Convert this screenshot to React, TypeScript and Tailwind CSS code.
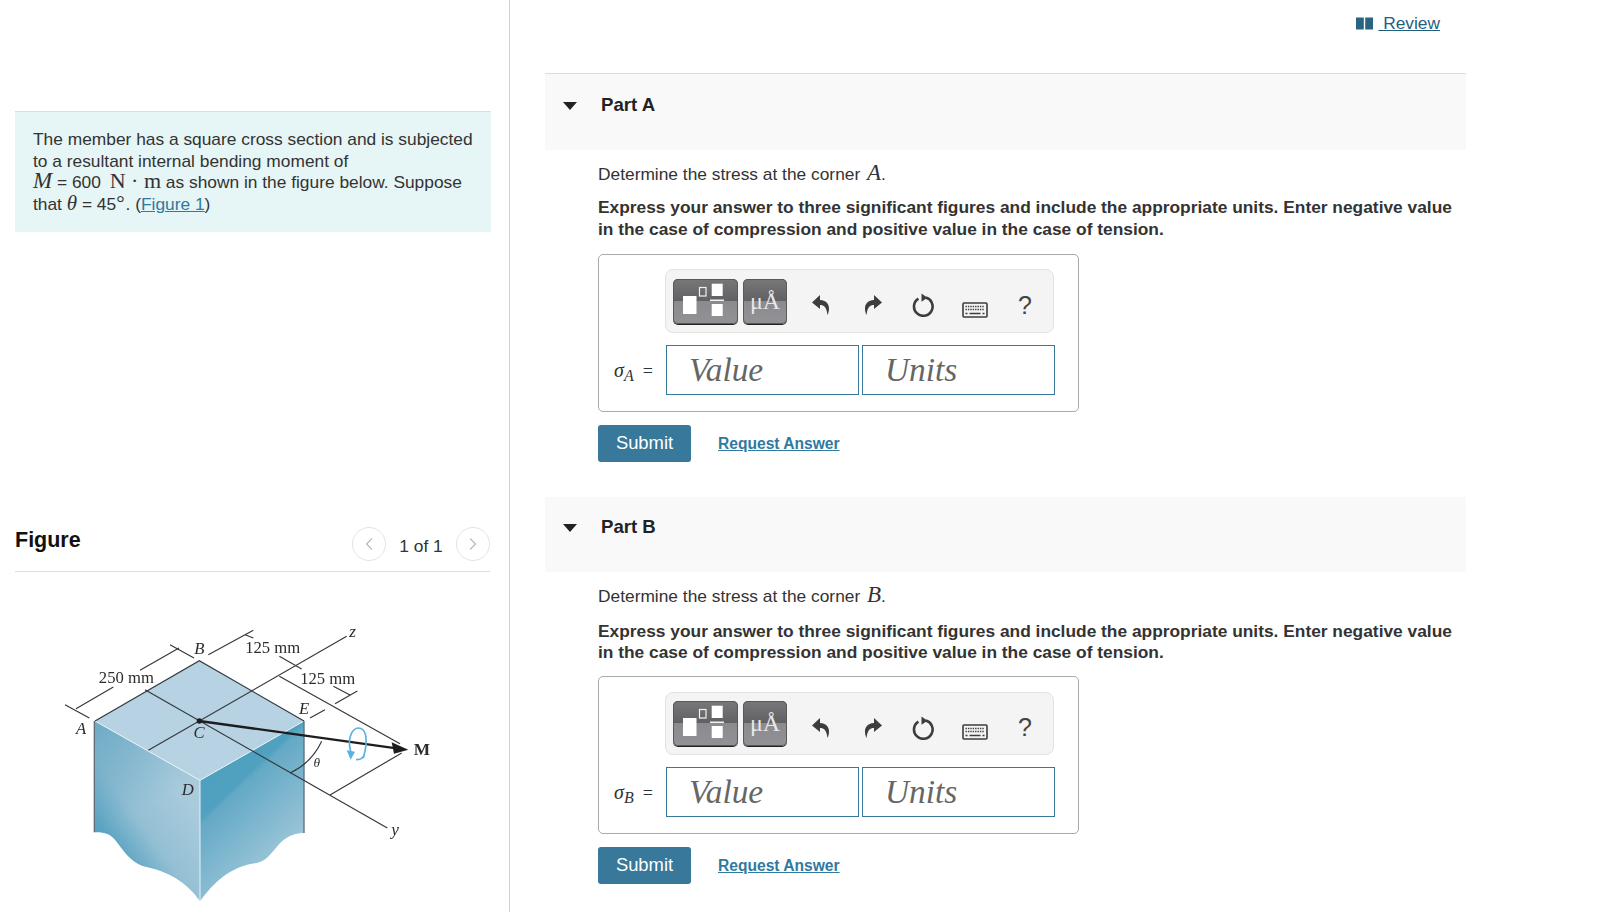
import { ChevronLeft, ChevronRight } from "lucide-react";
import React from "react";

const serif = "font-['Liberation_Serif',serif]";

const Cube = () => {
  const ink = "#33383b";
  return (
    <svg viewBox="45 187 1425 1017" className="block w-[475px] h-[339px] blur-[0.3px]">
      <defs>
        <linearGradient id="leftFace" gradientUnits="userSpaceOnUse" x1="300" y1="1040" x2="560" y2="860">
          <stop offset="0" stopColor="#4d9dbd" />
          <stop offset="0.18" stopColor="#5da5c3" />
          <stop offset="0.5" stopColor="#93bfd4" />
          <stop offset="1" stopColor="#a9cbdc" />
        </linearGradient>
        <linearGradient id="leftShade" gradientUnits="userSpaceOnUse" x1="285" y1="640" x2="420" y2="900">
          <stop offset="0" stopColor="#5da2c0" stopOpacity="0.75" />
          <stop offset="1" stopColor="#5da2c0" stopOpacity="0" />
        </linearGradient>
        <linearGradient id="rightFace" gradientUnits="userSpaceOnUse" x1="640" y1="740" x2="900" y2="1014">
          <stop offset="0" stopColor="#4f9fbf" />
          <stop offset="0.29" stopColor="#50a0c0" />
          <stop offset="0.33" stopColor="#64a9c6" />
          <stop offset="1" stopColor="#a0c8d9" />
        </linearGradient>
      </defs>

      <path d="M285 634 L600 812 L600 1175 C570 1130 520 1090 440 1072 C390 1060 370 1020 345 990 C325 968 305 968 283 968 Z" fill="url(#leftFace)" />
      <path d="M285 634 L600 812 L600 1175 C570 1130 520 1090 440 1072 C390 1060 370 1020 345 990 C325 968 305 968 283 968 Z" fill="url(#leftShade)" />
      <path d="M912 634 L600 812 L600 1175 C640 1120 690 1070 770 1060 C825 1050 830 970 912 970 Z" fill="url(#rightFace)" />
      <path d="M285 634 L598 453 L912 634 L600 812 Z" fill="#b7d2e2" />

      <path d="M285 634 L600 812 L912 634 M600 812 V1175" fill="none" stroke="#e8f3f8" strokeWidth="3" />
      <path d="M283 634 V968 M912 634 V970" fill="none" stroke="#5f6f78" strokeWidth="4" />
      <path d="M285 634 L598 453 L912 634" fill="none" stroke={ink} strokeWidth="3.5" />

      <g fill="none" stroke={ink} strokeWidth="3.5">
        {/* axes */}
        <path d="M445 722 L1040 380" />
        <path d="M435 540 L1162 955" />
        <path d="M838 500 L1200 702" />
        <path d="M990 856 L1205 730" />
        {/* 250 mm */}
        <path d="M195 585 L268 625 M510 405 L582 445" />
        <path d="M228 597 L340 532 M420 482 L537 415" />
        {/* 125 mm */}
        <path d="M625 435 L760 362 M735 375 L760 385" />
        <path d="M838 440 L905 478" />
        <path d="M930 625 L975 600 M1005 582 L1072 544 M1000 530 L1050 556" />
        {/* theta */}
        <path d="M870 790 Q935 760 965 695" />
      </g>

      <path d="M598 634 L1190 716" fill="none" stroke="#1d1d1d" strokeWidth="7" />
      <path d="M1225 720 L1175 698 L1182 732 Z" fill="#1d1d1d" />
      <circle cx="598" cy="634" r="8" fill="#1d1d1d" />

      <path d="M1052 725 C1040 680 1060 655 1075 655 C1095 655 1108 680 1090 745" fill="none" stroke="#5ab0de" strokeWidth="5" />
      <path d="M1068 750 C1075 750 1085 750 1090 740" fill="none" stroke="#5ab0de" strokeWidth="5" />
      <path d="M1040 722 L1065 726 L1052 750 Z" fill="#5ab0de" />

      <g className={serif} fill="#2c2c2c" fontSize="50" textAnchor="middle">
        <text x="379" y="520" textLength="165" lengthAdjust="spacingAndGlyphs">250 mm</text>
        <text x="818" y="431" textLength="165" lengthAdjust="spacingAndGlyphs">125 mm</text>
        <text x="983" y="523" textLength="165" lengthAdjust="spacingAndGlyphs">125 mm</text>
        <g fontStyle="italic">
          <text x="243" y="674">A</text>
          <text x="598" y="432">B</text>
          <text x="597" y="686">C</text>
          <text x="563" y="855">D</text>
          <text x="912" y="612">E</text>
          <text x="950" y="772" fontSize="40">θ</text>
          <text x="1058" y="382" fontSize="52">z</text>
          <text x="1185" y="975" fontSize="52">y</text>
        </g>
        <text x="1266" y="737" fontWeight="700" fontSize="52">M</text>
      </g>
    </svg>
  );
};

const TemplateIcon = () => (
  <svg viewBox="0 0 65 45" className="w-[65px] h-[45px]">
    <rect x="10" y="17" width="13.5" height="18" fill="#fff" />
    <rect x="26.5" y="8.5" width="6.5" height="8.5" fill="none" stroke="#f2f2f2" strokeWidth="1.2" />
    <rect x="38.7" y="4.7" width="11" height="12.3" fill="#fff" />
    <rect x="37" y="20.5" width="14" height="1.5" fill="#f2f2f2" />
    <rect x="38.7" y="25" width="11" height="12" fill="#fff" />
  </svg>
);

const UndoIcon = ({ flip }: { flip?: boolean }) => (
  <svg viewBox="0 0 18 20" className={`w-[18px] h-[20px] ${flip ? "-scale-x-100" : ""}`}>
    <path d="M8 0 L0 7.5 L8 14 V10 C12 10 14.5 12 15.5 20 C18 15 18.5 5.5 8 5 Z" fill="#3d3d3d" />
  </svg>
);

const RefreshIcon = () => (
  <svg viewBox="0 0 24 24" className="w-[24px] h-[24px]">
    <path d="M15 4.6 A9.3 9.3 0 1 1 7.4 5.6" fill="none" stroke="#3d3d3d" strokeWidth="2.6" />
    <path d="M10.5 0.5 L16.5 4.8 L10.5 8.8 Z" fill="#3d3d3d" />
  </svg>
);

const KeyboardIcon = () => (
  <svg viewBox="0 0 26 16" className="w-[26px] h-[16px]">
    <rect x="1" y="1" width="24" height="14" rx="1" fill="#f4f4f4" stroke="#3d3d3d" strokeWidth="1.6" />
    <path d="M3.5 4.5 H22.5 M3.5 7.5 H22.5" stroke="#3d3d3d" strokeWidth="1.6" strokeDasharray="1.4 1" />
    <path d="M3.5 11.5 H5.5 M7.5 11.5 H18.5 M20.5 11.5 H22.5" stroke="#3d3d3d" strokeWidth="1.6" />
  </svg>
);

const Toolbar = ({ height }: { height: string }) => (
  <div className={`ml-[66px] w-[389px] ${height} bg-[#f4f4f4] border border-[#e2e2e2] rounded-lg flex items-center pl-[7px]`}>
    <button className="w-[65px] h-[45px] rounded-[5px] shadow-[inset_0_0_0_1px_#59595b,0_1px_0_#222] bg-[linear-gradient(#78787a_0%,#616163_48%,#8a8a8f_48%,#919196_100%)]">
      <TemplateIcon />
    </button>
    <button className={`ml-[5px] w-[44px] h-[45px] rounded-[5px] shadow-[inset_0_0_0_1px_#59595b,0_1px_0_#222] bg-[linear-gradient(#78787a_0%,#616163_48%,#8a8a8f_48%,#919196_100%)] text-[#e8e8e8] text-[24px] leading-[36px] pb-[1px] ${serif}`}>
      μÅ
    </button>
    <div className="ml-[25px] flex items-center pt-[8px]">
      <UndoIcon />
      <div className="ml-[34px]">
        <UndoIcon flip />
      </div>
      <div className="ml-[29px]">
        <RefreshIcon />
      </div>
      <div className="ml-[27px] mt-[9px]">
        <KeyboardIcon />
      </div>
      <span className="ml-[30px] text-[25px] leading-none text-[#444]">?</span>
    </div>
  </div>
);

const AnswerField = ({ placeholder }: { placeholder: string }) => (
  <input
    readOnly
    placeholder={placeholder}
    className={`w-[193px] h-[50px] border border-[#37789b] pl-[22px] text-[33.4px] italic placeholder:text-[#666] outline-none ${serif}`}
  />
);

const PartSection = ({ letter, first }: { letter: string; first?: boolean }) => (
  <section className={first ? "" : "mt-[35px]"}>
    <div
      className={`bg-[#f9f9f9] flex items-start ${
        first ? "h-[77px] pt-[20px] border-t border-[#ddd]" : "h-[75px] pt-[19px]"
      }`}
    >
      <span className="ml-[18px] mt-[8px] w-0 h-0 border-x-[7px] border-x-transparent border-t-[8px] border-t-[#222]"></span>
      <h2 className="ml-[24px] text-[18.6px] leading-[22px] font-bold text-[#222]">Part {letter}</h2>
    </div>
    <div className="pl-[53px]">
      <p className="mt-[13px] leading-[22px] text-[#333]">
        Determine the stress at the corner <span className={`italic text-[23px] leading-[0] ml-[2px] ${serif}`}>{letter}</span>.
      </p>
      <p className={`font-bold text-[#333] ${first ? "mt-[11px] leading-[22px]" : "mt-[14px] leading-[21px]"}`}>
        Express your answer to three significant figures and include the appropriate units. Enter negative value
        <br />
        in the case of compression and positive value in the case of tension.
      </p>
      <div className={`w-[481px] h-[158px] border border-[#aaa] rounded-[5px] ${first ? "mt-[14px] pt-[14px]" : "mt-[13px] pt-[15px]"}`}>
        <Toolbar height={first ? "h-[64px]" : "h-[63px]"} />
        <div className="mt-[12px] flex items-center">
          <span className={`ml-[15px] w-[52px] text-[20px] text-[#333] whitespace-nowrap ${serif}`}>
            <i>σ</i>
            <sub className="text-[16px] italic">{letter}</sub>
            <span className="ml-[9px] text-[18px]">=</span>
          </span>
          <AnswerField placeholder="Value" />
          <div className="ml-[3px]">
            <AnswerField placeholder="Units" />
          </div>
        </div>
      </div>
      <div className="mt-[13px] flex items-center">
        <button className="w-[93px] h-[37px] pb-[1px] bg-[#37789b] rounded-[3px] text-white text-[18.4px]">Submit</button>
        <a className="ml-[27px] text-[15.6px] font-bold underline text-[#2f7a9e]">Request Answer</a>
      </div>
    </div>
  </section>
);

const PagerButton = ({ children }: { children: React.ReactNode }) => (
  <button className="w-[34px] h-[34px] rounded-full border border-[#e4e4e4] flex items-center justify-center text-[#bdbdbd]">
    {children}
  </button>
);

export default function App() {
  return (
    <div className="h-[912px] overflow-hidden flex bg-white text-[17.35px] font-['Liberation_Sans',Arial,sans-serif]">
      <aside className="w-[510px] shrink-0 border-r border-[#c3d2e2] pl-[15px] pr-[18px] pt-[111px]">
        <div className="h-[121px] bg-[#e6f5f5] border-t border-[#d9dfe3] pl-[18px] pt-[17px] leading-[21.6px] text-[#333]">
          The member has a square cross section and is subjected
          <br />
          to a resultant internal bending moment of
          <br />
          <span className={`italic text-[23px] leading-[0] ${serif}`}>M</span> = 600{" "}
          <span className={`text-[22px] leading-[0] ml-[4px] ${serif}`}>N · m</span> as shown in the figure below. Suppose
          <br />
          that <span className={`italic text-[21px] leading-[0] ${serif}`}>θ</span> = 45
          <span className={`text-[21px] leading-[0] ${serif}`}>°</span>
          <span className="ml-[1px]">.</span> (<a className="underline text-[#2f7a9e]">Figure 1</a>)
        </div>
        <div className="mt-[295px] mr-[1px] h-[45px] border-b border-[#ddd] flex justify-between">
          <h2 className="text-[21.5px] leading-[26px] font-bold text-[#111]">Figure</h2>
          <div className="flex items-start">
            <PagerButton>
              <ChevronLeft size={20} strokeWidth={1.6} />
            </PagerButton>
            <span className="w-[70px] text-center mt-[8px] leading-[22px] text-[#333]">1 of 1</span>
            <PagerButton>
              <ChevronRight size={20} strokeWidth={1.6} />
            </PagerButton>
          </div>
        </div>
        <Cube />
      </aside>
      <main className="w-[956px] pl-[35px]">
        <div className="h-[73px] flex justify-end pr-[26px] pt-[12px]">
          <a className="flex items-center h-[22px] text-[#1f5f7f]">
            <svg viewBox="0 0 17 13" className="w-[17px] h-[13px] mr-[5px]">
              <path d="M0 0.5 H7.8 V12.5 H0 Z M9.2 0.5 H17 V12.5 H9.2 Z" fill="#2a6480" />
            </svg>
            <span className="whitespace-pre underline"> Review</span>
          </a>
        </div>
        <PartSection letter="A" first />
        <PartSection letter="B" />
      </main>
    </div>
  );
}
